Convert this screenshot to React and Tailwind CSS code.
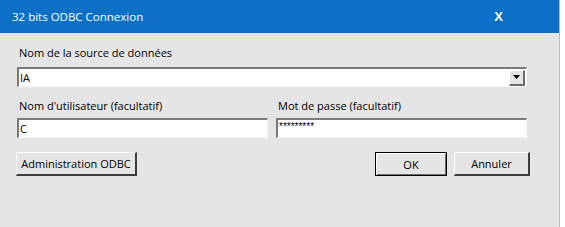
import React from 'react'

const font = { fontFamily: '"Open Sans", "Noto Sans", sans-serif' }

function Sunken({ className = '', children }) {
  return (
    <div
      className={`h-[20px] bg-white border-t-2 border-l-2 border-b border-r border-t-[#7a7a7a] border-l-[#7a7a7a] border-b-[#f7f7f7] border-r-[#f7f7f7] flex items-center pl-[1px] text-[11px] text-black leading-none ${className}`}
    >
      {children}
    </div>
  )
}

function Btn({ children, className = '', isDefault = false }) {
  return (
    <button
      className={`h-[24px] bg-[#e5e5e5] text-[11px] text-black leading-none ${
        isDefault
          ? 'border border-black shadow-[inset_1px_1px_0_#ffffff,inset_-1px_-1px_0_#6d6d6d]'
          : 'border-t border-l border-b-2 border-r-2 border-t-white border-l-white border-b-[#3c3c3c] border-r-[#3c3c3c]'
      } ${className}`}
    >
      {children}
    </button>
  )
}

export default function App() {
  return (
    <div className="w-[565px] h-[227px] bg-white flex" style={font}>
      <div className="w-[560px] h-full bg-[#e5e5e5] border-r border-[#9cc2ea] flex flex-col">
        {/* title bar */}
        <div className="h-[33px] bg-[#0b70c6] flex items-center justify-between pl-[12px] pr-[56px] shrink-0">
          <span className="text-white text-[11.5px]">32 bits ODBC Connexion</span>
          <span className="text-white text-[13px] font-bold leading-none" style={{ fontFamily: '"Liberation Sans", sans-serif' }}>X</span>
        </div>

        <div className="pl-[17px] pr-[32px] pt-[12px] flex flex-col">
          <div className="pl-[2px] text-[11px] text-black h-[15px] leading-[15px]">
            Nom de la source de données
          </div>
          <div className="mt-[7px] h-[20px] bg-white border-t-2 border-l-2 border-b border-r border-t-[#7a7a7a] border-l-[#7a7a7a] border-b-[#f7f7f7] border-r-[#f7f7f7] flex items-center justify-between">
            <span className="pl-[1px] text-[11px] text-black leading-none">IA</span>
            <div className="w-[16px] h-[16px] mr-[1px] bg-[#e5e5e5] border-t border-l border-b-2 border-r-2 border-t-white border-l-white border-b-[#6d6d6d] border-r-[#6d6d6d] flex items-center justify-center">
              <svg width="7" height="4" viewBox="0 0 7 4">
                <path d="M0 0h7L3.5 4z" fill="#000" />
              </svg>
            </div>
          </div>

          <div className="mt-[11px] flex gap-[8px]">
            <div className="w-[251px] flex flex-col">
              <div className="pl-[2px] text-[11px] text-black h-[15px] leading-[15px]">
                Nom d'utilisateur (facultatif)
              </div>
              <Sunken className="mt-[5px]">C</Sunken>
            </div>
            <div className="w-[251px] flex flex-col">
              <div className="pl-[2px] text-[11px] text-black h-[15px] leading-[15px]">
                Mot de passe (facultatif)
              </div>
              <Sunken className="mt-[5px] items-start pt-[2px]">
                <span className="text-[10px] leading-none" style={{ fontFamily: '"Liberation Sans", sans-serif' }}>
                  *********
                </span>
              </Sunken>
            </div>
          </div>

          <div className="mt-[14px] flex items-center">
            <Btn className="w-[121px] -ml-[1px]">Administration ODBC</Btn>
            <div className="flex-1" />
            <Btn isDefault className="w-[72px]">OK</Btn>
            <Btn className="w-[76px] ml-[7px] -mr-[3px]">Annuler</Btn>
          </div>
        </div>
      </div>
    </div>
  )
}
